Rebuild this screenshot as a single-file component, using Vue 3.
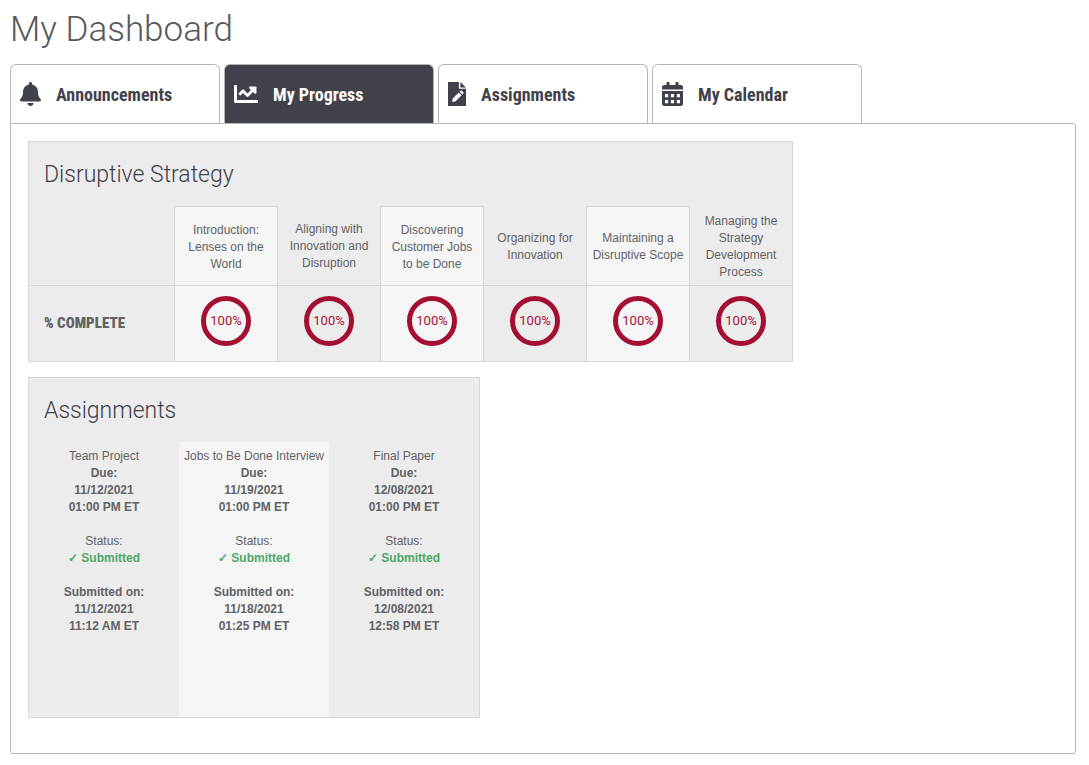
<script setup>
import { ref } from 'vue'

const activeTab = ref('progress')

const tabs = [
  { id: 'announcements', label: 'Announcements' },
  { id: 'progress', label: 'My Progress' },
  { id: 'assignments', label: 'Assignments' },
  { id: 'calendar', label: 'My Calendar' },
]

const modules = [
  { title: 'Introduction: Lenses on the World', complete: 100 },
  { title: 'Aligning with Innovation and Disruption', complete: 100 },
  { title: 'Discovering Customer Jobs to be Done', complete: 100 },
  { title: 'Organizing for Innovation', complete: 100 },
  { title: 'Maintaining a Disruptive Scope', complete: 100 },
  { title: 'Managing the Strategy Development Process', complete: 100 },
]

const assignments = [
  { title: 'Team Project', dueDate: '11/12/2021', dueTime: '01:00 PM ET', sentDate: '11/12/2021', sentTime: '11:12 AM ET' },
  { title: 'Jobs to Be Done Interview', dueDate: '11/19/2021', dueTime: '01:00 PM ET', sentDate: '11/18/2021', sentTime: '01:25 PM ET' },
  { title: 'Final Paper', dueDate: '12/08/2021', dueTime: '01:00 PM ET', sentDate: '12/08/2021', sentTime: '12:58 PM ET' },
]
</script>

<template>
  <main class="dashboard">
    <h1>My Dashboard</h1>

    <nav class="tabs">
      <button
        v-for="tab in tabs"
        :key="tab.id"
        type="button"
        class="tab"
        :class="{ active: activeTab === tab.id }"
        @click="activeTab = tab.id"
      >
        <svg v-if="tab.id === 'announcements'" class="icon" viewBox="0 0 448 512" aria-hidden="true">
          <path d="M224 512c35.32 0 63.97-28.65 63.97-64H160.03c0 35.35 28.65 64 63.97 64zm215.39-149.71c-19.32-20.76-55.47-51.99-55.47-154.29 0-77.7-54.48-139.9-127.94-155.16V32c0-17.67-14.32-32-31.98-32s-31.98 14.33-31.98 32v20.84C118.56 68.1 64.08 130.3 64.08 208c0 102.3-36.15 133.53-55.47 154.29-6 6.45-8.66 14.16-8.61 21.71.11 16.4 12.98 32 32.1 32h383.8c19.12 0 32-15.6 32.1-32 .05-7.55-2.61-15.27-8.61-21.71z" />
        </svg>
        <svg v-else-if="tab.id === 'progress'" class="icon" viewBox="0 0 512 512" aria-hidden="true">
          <path d="M496 384H64V80c0-8.84-7.16-16-16-16H16C7.16 64 0 71.16 0 80v336c0 17.67 14.33 32 32 32h464c8.84 0 16-7.16 16-16v-32c0-8.84-7.16-16-16-16zM464 96H345.94c-21.38 0-32.09 25.85-16.97 40.97l32.4 32.4L288 242.75l-73.37-73.37c-12.5-12.5-32.76-12.5-45.25 0l-68.69 68.69c-6.25 6.25-6.25 16.38 0 22.63l22.62 22.62c6.25 6.25 16.38 6.25 22.63 0L192 237.25l73.37 73.37c12.5 12.5 32.76 12.5 45.25 0l96-96 32.4 32.4c15.12 15.12 40.97 4.41 40.97-16.97V112c.01-8.84-7.15-16-15.99-16z" />
        </svg>
        <svg v-else-if="tab.id === 'assignments'" class="icon" viewBox="0 0 384 512" aria-hidden="true">
          <path fill-rule="evenodd" d="M0 0h232v144h152v368H0zM264 0l120 116H264zM88 424l14-74 128-128 60 60-128 128zM246 206l22-22q14-12 28 0l32 32q12 14 0 28l-22 22z" />
        </svg>
        <svg v-else class="icon" viewBox="0 0 448 512" aria-hidden="true">
          <path fill-rule="evenodd" d="M0 192h448v272c0 26.500-21.500 48-48 48H48c-26.500 0-48-21.500-48-48zM64 256v68h68v-68zM190 256v68h68v-68zM316 256v68h68v-68zM64 384v68h68v-68zM190 384v68h68v-68zM316 384v68h68v-68z" />
          <path d="M400 64h-48V16c0-8.800-7.200-16-16-16h-32c-8.800 0-16 7.200-16 16v48H160V16c0-8.800-7.200-16-16-16h-32c-8.800 0-16 7.200-16 16v48H48C21.500 64 0 85.500 0 112v48h448v-48c0-26.500-21.500-48-48-48z" />
        </svg>
        <span>{{ tab.label }}</span>
      </button>
    </nav>

    <div class="panel">
      <section class="card">
        <h2>Disruptive Strategy</h2>
        <table class="progress">
          <thead>
            <tr>
              <td class="row-label"></td>
              <th v-for="m in modules" :key="m.title" scope="col">{{ m.title }}</th>
            </tr>
          </thead>
          <tbody>
            <tr>
              <th class="row-label" scope="row">% COMPLETE</th>
              <td v-for="m in modules" :key="m.title">
                <div class="ring">{{ m.complete }}%</div>
              </td>
            </tr>
          </tbody>
        </table>
      </section>

      <section class="card">
        <h2>Assignments</h2>
        <div class="assignments">
          <article v-for="a in assignments" :key="a.title" class="assignment">
            <p>{{ a.title }}</p>
            <p class="strong">Due:<br>{{ a.dueDate }}<br>{{ a.dueTime }}</p>
            <p class="spaced">Status:</p>
            <p class="strong submitted">✓ Submitted</p>
            <p class="strong spaced">Submitted on:<br>{{ a.sentDate }}<br>{{ a.sentTime }}</p>
          </article>
        </div>
      </section>
    </div>
  </main>
</template>

<style>
body {
  background: #fff;
}
</style>

<style scoped>
.dashboard {
  padding: 9px 13px 11px 10px;
  font-family: "Liberation Sans", Arial, sans-serif;
  font-size: 12px;
  line-height: 17px;
  color: #626365;
}

h1 {
  margin: 0 0 13px;
  font-family: Roboto, sans-serif;
  font-size: 35px;
  font-weight: 300;
  line-height: 42px;
  color: #58595b;
}

.tabs {
  display: flex;
  gap: 4px;
}

.tab {
  display: flex;
  align-items: center;
  gap: 15px;
  width: 210px;
  height: 59px;
  padding: 0 9px;
  border: 1px solid #b5b5b5;
  border-bottom: 0;
  border-radius: 6px 6px 0 0;
  background: #fff;
  color: #3f414b;
  font-family: "Roboto Condensed", "Liberation Sans Narrow", sans-serif;
  font-size: 18px;
  font-weight: 700;
  cursor: pointer;
}

.tab.active {
  background: #3f414b;
  color: #fff;
}

.icon {
  flex: none;
  height: 24px;
  fill: currentColor;
}

.panel {
  display: flex;
  flex-direction: column;
  align-items: flex-start;
  gap: 15px;
  padding: 17px 17px 35px;
  border: 1px solid #b5b5b5;
  border-radius: 0 3px 3px 3px;
}

.card {
  border: 1px solid #d6d6d6;
  background: #ececec;
}

h2 {
  margin: 0;
  padding: 17px 15px 15px;
  font-family: Roboto, sans-serif;
  font-size: 23px;
  font-weight: 300;
  line-height: 32px;
  color: #3f414b;
}

.progress {
  table-layout: fixed;
  width: 763px;
  border-collapse: separate;
  border-spacing: 0;
  text-align: center;
}

.progress th,
.progress td {
  box-sizing: border-box;
  height: 76px;
  padding: 0 5px;
  border-left: 1px solid #d6d6d6;
  font-weight: 400;
}

.progress thead th,
.progress thead td {
  height: 79px;
  padding-top: 2px;
}

.progress thead th:nth-child(even) {
  border-top: 1px solid #d6d6d6;
}

.progress th:nth-child(even),
.progress td:nth-child(even) {
  background: #f5f5f5;
}

.progress tbody th,
.progress tbody td {
  border-top: 1px solid #d6d6d6;
}

.progress .row-label {
  width: 145px;
  padding: 0 15px;
  border-left: 0;
  font-family: "Roboto Condensed", "Liberation Sans Narrow", sans-serif;
  font-size: 15px;
  font-weight: 900;
  text-align: left;
}

.ring {
  display: flex;
  align-items: center;
  justify-content: center;
  box-sizing: border-box;
  width: 50px;
  height: 50px;
  margin: 0 auto 6px;
  border: 5px solid #a41034;
  border-radius: 50%;
  color: #a41034;
  font-family: Roboto, sans-serif;
  font-size: 13px;
}

.assignments {
  display: grid;
  grid-template-columns: repeat(3, 150px);
}

.assignment {
  min-height: 264px;
  padding: 6px 2px 5px;
  text-align: center;
}

.assignment:nth-child(even) {
  background: #f5f5f5;
}

.assignment p {
  margin: 0;
}

.assignment .spaced {
  margin-top: 17px;
}

.assignment .strong {
  font-weight: 700;
}

.assignment .submitted {
  color: #4fa768;
}
</style>
